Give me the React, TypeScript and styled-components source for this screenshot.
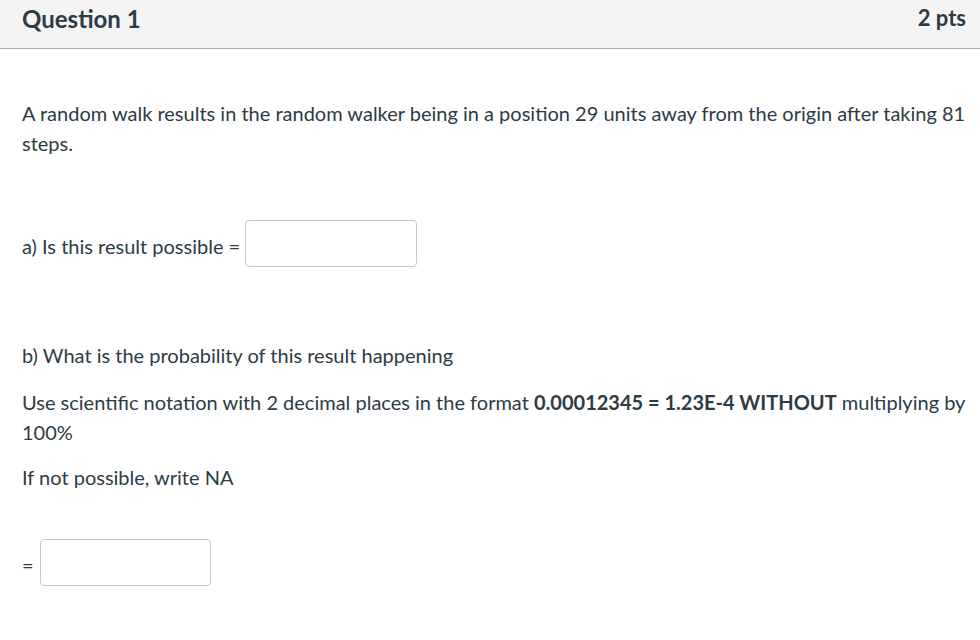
import React from "react";
import styled, { createGlobalStyle } from "styled-components";

const Global = createGlobalStyle`
  html, body { margin: 0; padding: 0; background: #ffffff; }
  body { font-family: Lato, "Open Sans", sans-serif; color: #2d3b45; }
`;

const Card = styled.div`
  width: 980px;
  background: #fff;
`;

const Header = styled.div`
  display: flex;
  justify-content: space-between;
  align-items: flex-start;
  height: 49px;
  box-sizing: border-box;
  padding: 4px 14px 0 22px;
  background: #f4f4f4;
  border-bottom: 1px solid #aaaaaa;
`;

const Title = styled.h2`
  margin: 0;
  font-size: 24px;
  font-weight: 700;
  color: #2d3b45;
`;

const Points = styled.span`
  font-size: 22px;
  font-weight: 700;
  color: #2d3b45;
`;

const Body = styled.div`
  padding: 49px 14px 20px 22px;
  font-size: 20px;
  line-height: 30px;
`;

const P = styled.p<{ $mt?: number }>`
  margin: ${(p) => p.$mt ?? 0}px 0 0 0;
`;

const Row = styled.div<{ $mt: number; $gap: number }>`
  display: flex;
  align-items: center;
  margin-top: ${(p) => p.$mt}px;
  gap: ${(p) => p.$gap}px;
`;

const Label = styled.span`
  padding-top: 5px;
`;

const Input = styled.input<{ $w: number }>`
  width: ${(p) => p.$w}px;
  height: 47px;
  box-sizing: border-box;
  border: 1px solid #c7c7c7;
  border-radius: 4px;
  background: #fff;
  font: inherit;
`;

export default function App() {
  return (
    <>
      <Global />
      <Card>
        <Header>
          <Title>Question 1</Title>
          <Points>2 pts</Points>
        </Header>
        <Body>
          <P>
            A random walk results in the random walker being in a position 29 units away from the origin after taking 81
            steps.
          </P>
          <Row $mt={62} $gap={5}>
            <Label>a) Is this result possible =</Label>
            <Input $w={172} />
          </Row>
          <P $mt={73}>b) What is the probability of this result happening</P>
          <P $mt={17}>
            Use scientific notation with 2 decimal places in the format <b>0.00012345 = 1.23E-4 WITHOUT</b> multiplying by
            100%
          </P>
          <P $mt={15}>If not possible, write NA</P>
          <Row $mt={47} $gap={6}>
            <Label>=</Label>
            <Input $w={171} />
          </Row>
        </Body>
      </Card>
    </>
  );
}
